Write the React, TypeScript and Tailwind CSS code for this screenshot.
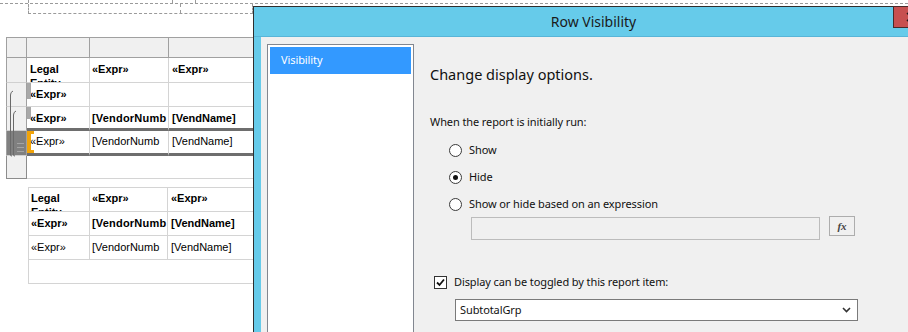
import React from "react";

// report designer on the left, "Row Visibility" dialog on the right

const Radio: React.FC<{ checked?: boolean; label: string }> = ({ checked, label }) => (
  <div className="flex items-center h-[16px] pl-[19px]">
    <span className="w-[13px] h-[13px] rounded-full border border-[#3a3a3a] bg-white flex items-center justify-center">
      {checked && <span className="w-[5px] h-[5px] rounded-full bg-[#111]" />}
    </span>
    <span className="ml-[7px]">{label}</span>
  </div>
);

const Designer: React.FC = () => {
  return (
    <div className="relative w-[253px] shrink-0 overflow-hidden font-['Liberation_Sans',Arial,sans-serif] text-[11px] leading-[14px] text-black">
      <div className="ml-[28px] h-[10px] border-x border-b border-dashed border-[#9a9a9a] flex">
        <div className="w-[152px] border-r border-dashed border-[#9a9a9a]" />
      </div>

      {/* first tablix */}
      <div className="ml-[6px] mt-[23px] w-[260px]">
        <div className="flex h-[21px] border-t border-[#a0a0a0]">
          <div className="w-[21px] bg-[#f0f0f0] border-x border-b border-[#a0a0a0]" />
          <div className="w-[63px] bg-[#f0f0f0] border-r border-b border-[#a0a0a0]" />
          <div className="w-[79px] bg-[#f0f0f0] border-r border-b border-[#a0a0a0]" />
          <div className="w-[90px] bg-[#f0f0f0] border-b border-[#a0a0a0]" />
        </div>
        <div className="flex h-[25px] font-bold">
          <div className="w-[21px] bg-[#f0f0f0] border-x border-b border-x-[#a0a0a0] border-b-[#d0d0d0]" />
          <div className="w-[63px] border-r border-b border-[#d4d4d4] pl-[3px] pt-[4px] overflow-hidden">Legal Entity</div>
          <div className="w-[79px] border-r border-b border-[#d4d4d4] pl-[2px] pt-[4px]">«Expr»</div>
          <div className="w-[90px] border-b border-[#d4d4d4] pl-[3px] pt-[4px]">«Expr»</div>
        </div>
        <div className="flex h-[24px] font-bold">
          <div className="w-[21px] bg-[#f0f0f0] border-x border-b border-x-[#a0a0a0] border-b-[#d0d0d0]" />
          <div className="relative w-[63px] border-r border-b border-[#d4d4d4] pl-[3px] pt-[4px]">
            <span className="absolute left-0 top-0 w-[4px] h-[16px] bg-[#a8a8a8]" />
            «Expr»
          </div>
          <div className="w-[79px] border-r border-b border-[#d4d4d4]" />
          <div className="w-[90px] border-b border-[#d4d4d4]" />
        </div>
        <div className="flex h-[24px] font-bold">
          <div className="w-[21px] bg-[#f0f0f0] border-x border-b border-x-[#a0a0a0] border-b-[#d0d0d0]" />
          <div className="relative w-[63px] border-r border-[#d4d4d4] border-b-[3px] border-b-[#6e6e6e] pl-[3px] pt-[4px]">
            <span className="absolute left-0 top-0 w-[4px] h-[12px] bg-[#a8a8a8]" />
            «Expr»
          </div>
          <div className="w-[79px] border-r border-[#d4d4d4] border-b-[3px] border-b-[#6e6e6e] pl-[2px] pt-[4px] overflow-hidden whitespace-nowrap tracking-[0.2px]">[VendorNumb</div>
          <div className="w-[90px] border-b-[3px] border-b-[#6e6e6e] pl-[3px] pt-[4px] whitespace-nowrap">[VendName]</div>
        </div>
        <div className="flex h-[25px]">
          <div className="w-[21px] bg-[#808080] border-x border-b border-x-[#a0a0a0] border-b-[#d0d0d0]" />
          <div className="relative w-[63px] border-r border-[#d4d4d4] border-b-[3px] border-b-[#6e6e6e] pl-[3px] pt-[3px]">
            <span className="absolute left-0 top-0 w-[7px] h-[22px] border-y-[3px] border-l-[4px] border-[#f0a30a]" />
            «Expr»
          </div>
          <div className="w-[79px] border-r border-[#d4d4d4] border-b-[3px] border-b-[#6e6e6e] pl-[2px] pt-[3px] overflow-hidden whitespace-nowrap">[VendorNumb</div>
          <div className="w-[90px] border-b-[3px] border-b-[#6e6e6e] pl-[3px] pt-[3px] whitespace-nowrap">[VendName]</div>
        </div>
        <div className="flex h-[23px]">
          <div className="w-[21px] bg-[#f0f0f0] border-x border-b border-[#8c8c8c]" />
          <div className="flex-1 border-b border-[#d4d4d4]" />
        </div>
      </div>

      {/* group brackets in the row handles */}
      <svg className="absolute left-[6px] top-[82px]" width="21" height="74" viewBox="0 0 21 74">
        <path d="M7 5 Q4.5 6 4.5 9 L4.5 69 Q4.5 70 6 70" fill="none" stroke="#6a6a6a" strokeWidth="1" />
        <path d="M10 25 Q7.5 26 7.5 29 L7.5 69 Q7.5 70 9 70" fill="none" stroke="#6a6a6a" strokeWidth="1" />
        <path d="M11 57.5 H18 M11 61.5 H18 M11 65.5 H18" stroke="#a4a4a4" strokeWidth="1" />
      </svg>

      {/* second tablix */}
      <div className="ml-[28px] mt-[8px] w-[260px] border-t border-l border-[#d4d4d4]">
        <div className="flex h-[24px] font-bold">
          <div className="w-[61px] border-r border-b border-[#d4d4d4] pl-[2px] pt-[3px] overflow-hidden">Legal Entity</div>
          <div className="w-[78px] border-r border-b border-[#d4d4d4] pl-[2px] pt-[3px]">«Expr»</div>
          <div className="flex-1 border-b border-[#d4d4d4] pl-[3px] pt-[3px]">«Expr»</div>
        </div>
        <div className="flex h-[24px] font-bold">
          <div className="w-[61px] border-r border-b border-[#d4d4d4] pl-[2px] pt-[4px]">«Expr»</div>
          <div className="w-[78px] border-r border-b border-[#d4d4d4] pl-[2px] pt-[4px] overflow-hidden whitespace-nowrap tracking-[0.2px]">[VendorNumb</div>
          <div className="flex-1 border-b border-[#d4d4d4] pl-[3px] pt-[4px] whitespace-nowrap">[VendName]</div>
        </div>
        <div className="flex h-[24px]">
          <div className="w-[61px] border-r border-b border-[#d4d4d4] pl-[2px] pt-[4px]">«Expr»</div>
          <div className="w-[78px] border-r border-b border-[#d4d4d4] pl-[2px] pt-[4px] overflow-hidden whitespace-nowrap">[VendorNumb</div>
          <div className="flex-1 border-b border-[#d4d4d4] pl-[3px] pt-[4px] whitespace-nowrap">[VendName]</div>
        </div>
        <div className="h-[24px] border-b border-[#d4d4d4]" />
      </div>
    </div>
  );
};

const Dialog: React.FC = () => {
  return (
    <div className="relative mt-[2px] w-[680px] shrink-0 flex flex-col border-l border-t border-[#2e2e2e] bg-[#66cbea] font-['Segoe_UI','Noto_Sans',sans-serif] text-[11px] tracking-[-0.1px] text-[#111]">
      <div className="h-[30px] shrink-0 border-b border-[#58b5d8] flex items-center justify-center text-[14px] tracking-normal text-[#1a1a1a]">
        Row Visibility
      </div>
      <div className="absolute left-[639px] top-[-1px] w-[46px] h-[22px] bg-[#c75050] border border-[#4a2a2a]">
        <svg className="absolute left-[12px] top-[5px]" width="12" height="10" viewBox="0 0 12 10">
          <path d="M1 1 L10 9 M10 1 L1 9" stroke="#1a1a1a" strokeWidth="1.6" />
        </svg>
      </div>

      <div className="ml-[7px] flex-1 bg-[#f0f0f0] flex">
        <div className="ml-[6px] mt-[7px] w-[147px] h-[320px] shrink-0 border border-[#828790] bg-white p-[2px]">
          <div className="h-[27px] bg-[#3399ff] text-white pl-[11px] flex items-center">Visibility</div>
        </div>

        <div className="ml-[16px] flex-1 flex flex-col">
          <div className="mt-[27px] h-[20px] leading-[20px] text-[14.5px] tracking-normal">Change display options.</div>
          <div className="mt-[30px] h-[16px] leading-[16px]">When the report is initially run:</div>
          <div className="mt-[12px] flex flex-col gap-[11px]">
            <Radio label="Show" />
            <Radio checked label="Hide" />
            <Radio label="Show or hide based on an expression" />
          </div>
          <div className="mt-[5px] ml-[41px] flex items-start">
            <div className="w-[349px] h-[23px] border border-[#bcbcbc] bg-[#f0f0f0]" />
            <div className="ml-[9px] mt-[-1px] w-[26px] h-[20px] border border-[#adadad] bg-[#f0f0f0] flex items-center justify-center font-['Liberation_Serif',serif] italic font-bold text-[11px] text-[#444]">
              fx
            </div>
          </div>
          <div className="mt-[34px] h-[16px] flex items-center pl-[4px]">
            <span className="w-[13px] h-[13px] border border-[#333] bg-white flex items-center justify-center">
              <svg width="11" height="11" viewBox="0 0 11 11">
                <path d="M2 5.5 L4.5 8 L9 2.5" fill="none" stroke="#111" strokeWidth="1.8" />
              </svg>
            </span>
            <span className="ml-[7px]">Display can be toggled by this report item:</span>
          </div>
          <div className="mt-[9px] ml-[25px] w-[403px] h-[22px] border border-[#7a7a7a] bg-white flex items-center justify-between pl-[4px] pr-[6px]">
            <span>SubtotalGrp</span>
            <svg width="9" height="6" viewBox="0 0 9 6">
              <path d="M1 1 L4.5 4.5 L8 1" fill="none" stroke="#333" strokeWidth="1.6" />
            </svg>
          </div>
        </div>
      </div>
    </div>
  );
};

const App: React.FC = () => {
  return (
    <div className="w-[908px] h-[332px] overflow-hidden bg-white flex flex-col">
      <div className="h-[4px] shrink-0 border-b border-dashed border-[#9a9a9a] flex">
        <div className="ml-[28px] w-[145px] border-x border-dashed border-[#9a9a9a]" />
        <div className="ml-[22px] w-[60px] border-l border-dashed border-[#9a9a9a]" />
      </div>
      <div className="flex flex-1 min-h-0">
        <Designer />
        <Dialog />
      </div>
    </div>
  );
};

export default App;
